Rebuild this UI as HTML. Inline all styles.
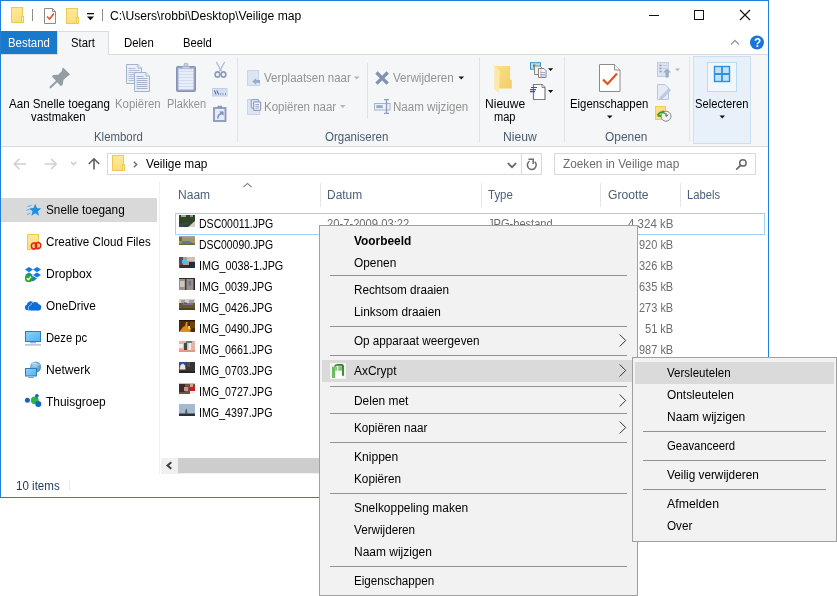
<!DOCTYPE html>
<html lang="nl"><head><meta charset="utf-8"><title>Veilige map</title>
<style>
html,body{margin:0;padding:0;background:#fff;}
body{width:837px;height:596px;position:relative;overflow:hidden;font-family:"Liberation Sans",sans-serif;font-size:12px;}
.a{position:absolute;}
.t{position:absolute;white-space:nowrap;transform-origin:0 0;display:block;}
svg{position:absolute;overflow:visible;}
.ms{left:330px;width:297px;height:1px;background:#919191;}
.ss{left:643px;width:183px;height:1px;background:#919191;}
.th{left:179px;width:16px;}

</style></head><body>
<!-- window frame -->
<div class="a" style="left:0;top:0;width:767px;height:496px;border:1px solid #2080d8;background:#fff"></div>
<!-- tab row -->
<div class="a" style="left:1px;top:31px;width:56px;height:23px;background:#1979ca"></div>
<!-- ribbon -->
<div class="a" style="left:1px;top:54px;width:767px;height:93px;background:#f5f6f7;border-top:1px solid #dadbdc;border-bottom:1px solid #dadbdc;box-sizing:border-box"></div>
<div class="a" style="left:57px;top:31px;width:52px;height:24px;background:#f5f6f7;border:1px solid #dadbdc;border-bottom:none;box-sizing:border-box"></div>
<!-- ribbon separators -->
<div class="a" style="left:237px;top:57px;width:1px;height:85px;background:#e2e3e4"></div>
<div class="a" style="left:367px;top:63px;width:1px;height:56px;background:#e2e3e4"></div>
<div class="a" style="left:479px;top:57px;width:1px;height:85px;background:#e2e3e4"></div>
<div class="a" style="left:564px;top:57px;width:1px;height:85px;background:#e2e3e4"></div>
<div class="a" style="left:689px;top:57px;width:1px;height:85px;background:#e2e3e4"></div>
<!-- selecteren box -->
<div class="a" style="left:693px;top:56px;width:58px;height:88px;background:#e8f1fa;border:1px solid #c9e0f5;box-sizing:border-box"></div>
<div class="a" style="left:707px;top:62px;width:30px;height:30px;background:#f1f7fc;border:1px solid #b9dcf6;box-sizing:border-box"></div>
<!-- address bar -->
<div class="a" style="left:107px;top:153px;width:435px;height:22px;border:1px solid #d9d9d9;box-sizing:border-box"></div>
<div class="a" style="left:521px;top:154px;width:1px;height:20px;background:#d9d9d9"></div>
<div class="a" style="left:554px;top:153px;width:202px;height:22px;border:1px solid #d9d9d9;box-sizing:border-box"></div>
<!-- nav pane -->
<div class="a" style="left:1px;top:198px;width:156px;height:24px;background:#d9d9d9"></div>
<div class="a" style="left:159px;top:181px;width:1px;height:293px;background:#f0f0f0"></div>
<!-- header separators -->
<div class="a" style="left:320px;top:183px;width:1px;height:24px;background:#e5e5e5"></div>
<div class="a" style="left:481px;top:183px;width:1px;height:24px;background:#e5e5e5"></div>
<div class="a" style="left:600px;top:183px;width:1px;height:24px;background:#e5e5e5"></div>
<div class="a" style="left:680px;top:183px;width:1px;height:24px;background:#e5e5e5"></div>
<!-- selected row -->
<div class="a" style="left:175px;top:213px;width:590px;height:22px;border:1px solid #99d1ff;box-sizing:border-box"></div>
<!-- scrollbar -->
<div class="a" style="left:161px;top:458px;width:607px;height:16px;background:#f0f0f0"></div>
<div class="a" style="left:178px;top:458px;width:460px;height:15px;background:#cdcdcd"></div>
<!-- status separator -->
<div class="a" style="left:69px;top:480px;width:1px;height:11px;background:#ececec"></div>
<svg width="837" height="596" viewBox="0 0 837 596" style="left:0;top:0">
<defs>
<linearGradient id="fy" x1="0" y1="0" x2="0" y2="1"><stop offset="0" stop-color="#fee99a"/><stop offset="1" stop-color="#fcdd7c"/></linearGradient>
</defs>
<!-- title bar icons -->
<g>
<rect x="11.5" y="7.5" width="11" height="15" fill="url(#fy)" stroke="#eecb50"/>
<rect x="21.5" y="16.5" width="2" height="6" fill="#fdeeb4" stroke="#eecb50"/>
<line x1="32.5" y1="9" x2="32.5" y2="21" stroke="#8d8d8d"/>
<path d="M44.5 8.5h8l3 3v12h-11z" fill="#fff" stroke="#8c8c8c"/>
<path d="M52.5 8.5v3h3" fill="none" stroke="#8c8c8c"/>
<polyline points="47,16.5 49.5,19 54,13.5" fill="none" stroke="#e8501c" stroke-width="1.6"/>
<rect x="66.500" y="8.500" width="11" height="15" fill="url(#fy)" stroke="#eecb50"/>
<rect x="76.500" y="17.500" width="2" height="6" fill="#fdeeb4" stroke="#eecb50"/>
<rect x="87" y="13" width="7" height="1.300" fill="#111"/>
<path d="M87 16.500h7l-3.500 3.700z" fill="#111"/>
<line x1="102.500" y1="9" x2="102.500" y2="21" stroke="#8d8d8d"/>
</g>
<!-- window controls -->
<line x1="649" y1="15.500" x2="659" y2="15.500" stroke="#111"/>
<rect x="694.500" y="10.500" width="9" height="9" fill="none" stroke="#111"/>
<path d="M740 10l10 10M750 10l-10 10" stroke="#111" stroke-width="1.100" fill="none"/>
<!-- ribbon collapse + help -->
<polyline points="731,44.500 735,40.500 739,44.500" fill="none" stroke="#9a9a9a" stroke-width="1.300"/>
<circle cx="757" cy="42.500" r="7" fill="#1b74d8"/>
<!-- address nav arrows -->
<g fill="none" stroke="#cfcfcf" stroke-width="1.500">
<path d="M26 164H14.500M19.500 158.800l-5.200 5.200 5.200 5.200"/>
<path d="M44.500 164H56M51 158.800l5.200 5.200-5.200 5.200"/>
</g>
<polyline points="71,162 73.600,164.600 76.200,162" fill="none" stroke="#c4c4c4" stroke-width="1.200"/>
<path d="M94 169.500V158.800M88.800 164l5.200-5.200 5.200 5.200" fill="none" stroke="#5f5f5f" stroke-width="1.600"/>
<!-- address folder -->
<rect x="112.500" y="155.500" width="11" height="15" fill="url(#fy)" stroke="#eecb50"/>
<rect x="122.500" y="164.500" width="2" height="6" fill="#fdeeb4" stroke="#eecb50"/>
<polyline points="133.800,161.800 136.700,164.500 133.800,167.200" fill="none" stroke="#6e6e6e" stroke-width="1.500"/>
<polyline points="507.800,163 512,167.200 516.200,163" fill="none" stroke="#626262" stroke-width="1.700"/>
<path d="M534.800 161.800a4.400 4.400 0 1 1-5.200-.6" fill="none" stroke="#6a6a6a" stroke-width="1.500"/>
<path d="M528.500 159.300h4.700v4.700" fill="none" stroke="#6a6a6a" stroke-width="1.500"/>
<!-- search magnifier -->
<circle cx="742.900" cy="162.900" r="3.200" fill="none" stroke="#6a6a6a" stroke-width="1.500"/>
<line x1="740.600" y1="165.300" x2="736.200" y2="169.700" stroke="#6a6a6a" stroke-width="1.700"/>
<!-- sort arrow -->
<polyline points="243.500,187.200 247.500,183.400 251.500,187.200" fill="none" stroke="#7a7a7a" stroke-width="1.100"/>
<!-- scrollbar arrow -->
<polyline points="171.300,462.200 167.500,465.500 171.300,468.800" fill="none" stroke="#404040" stroke-width="2"/>
</svg>
<svg width="837" height="596" viewBox="0 0 837 596" style="left:0;top:0">
<!-- pin -->
<path d="M63.300 67.800L70.200 74.400 67.600 76.300 63.400 80 62.900 84.300 60.900 86.200 52 76.400 53.300 74.900 58.200 74.700 62 70.900 62.300 68.600z" fill="#929da4"/>
<path d="M57.500 80.600L50.500 87.300" stroke="#929da4" stroke-width="2" stroke-linecap="round" fill="none"/>
<!-- copy icon (disabled) -->
<g fill="#e9eef8" stroke="#a3b2cf">
<path d="M126.500 64.500h11.500l3.500 3.500v15.500h-15z"/>
<path d="M138 64.500v3.500h3.500" fill="#f6f8fc"/>
</g>
<path d="M128.500 68.500h7M128.500 70.500h11M128.500 72.500h11M128.500 74.500h11M128.500 76.500h11M128.500 78.500h11M128.500 80.500h11" stroke="#b4c0d8" stroke-width="1"/>
<g fill="#e9eef8" stroke="#a3b2cf">
<path d="M134.500 72.500h11.500l3.500 3.500v15.500h-15z"/>
<path d="M146 72.500v3.500h3.500" fill="#f6f8fc"/>
</g>
<path d="M136.500 76.500h7M136.500 78.500h11M136.500 80.500h11M136.500 82.500h11M136.500 84.500h11M136.500 86.500h11M136.500 88.500h11" stroke="#a4b2ce" stroke-width="1"/>
<!-- paste icon -->
<rect x="176.500" y="66.500" width="19" height="25" rx="1" fill="#96a5c3" stroke="#8292b4"/>
<rect x="178.500" y="68.500" width="15" height="21" fill="#e9effa"/>
<path d="M179 71.500h14M179 74.500h14M179 77.500h14M179 80.500h14M179 83.500h14M179 86.500h14" stroke="#d3dcee" stroke-width="1"/>
<path d="M180 68.800c1.500-.3 2.500-1.300 3-2.600h6c.5 1.300 1.500 2.300 3 2.600z" fill="#c4cee2" stroke="#a3b0cc" stroke-width=".6"/>
<rect x="184" y="63.300" width="4" height="3.200" rx="1.200" fill="#c4cee2" stroke="#9dabc8" stroke-width=".7"/>
<!-- scissors -->
<path d="M216.300 62l5.400 9.500M224.700 62l-5.400 9.500" fill="none" stroke="#b0bdd6" stroke-width="1.400"/>
<g fill="none" stroke="#8a9cc4" stroke-width="1.700">
<ellipse cx="217.500" cy="74.500" rx="2.300" ry="2.700"/>
<ellipse cx="223.500" cy="74.500" rx="2.300" ry="2.700"/>
</g>
<!-- copy path -->
<rect x="212.500" y="88.500" width="14.500" height="7.500" fill="#d6dff0" stroke="#c3cfe6"/>
<path d="M214.500 90.500l1.500 4M217 90.500l1.500 4M220 94h1M222.500 94h1M225 94h1" stroke="#3c5a9a" stroke-width="1"/>
<!-- paste shortcut -->
<rect x="214" y="108" width="11.500" height="13" fill="#e4eaf6" stroke="#8797bf" stroke-width="1.800"/>
<rect x="217.500" y="105.800" width="4.500" height="2.200" fill="#8797bf"/>
<path d="M217.800 118.500c0-3 1.500-4.500 4-4.800" fill="none" stroke="#8797bf" stroke-width="1.700"/>
<path d="M219.800 111.800h3.400v3.400z" fill="#8797bf" stroke="#8797bf" stroke-width=".8"/>
<!-- move to -->
<path d="M247.500 70.500h11v10h1.200v5h-12.200z" fill="#dde5f3" stroke="#c8d4ea"/>
<path d="M260 80h-3.800v-1.900l-3.900 3.300 3.900 3.400v-1.900h3.800z" fill="#9aabc9"/>
<!-- copy to -->
<path d="M247.500 99.500h11v10h1.200v5h-12.200z" fill="#dde5f3" stroke="#c8d4ea"/>
<rect x="251.300" y="99.600" width="7" height="8.500" rx=".8" fill="#eef2f9" stroke="#95a5c6" stroke-width="1.200"/>
<rect x="253.600" y="101.800" width="7" height="8.500" rx=".8" fill="#f2f5fb" stroke="#8e9fc2" stroke-width="1.300"/>
<path d="M255.300 104.500h3.700M255.300 106.300h3.700M255.300 108.100h3.700" stroke="#8e9fc2" stroke-width=".9"/>
<!-- dropdown arrows (disabled) -->
<path d="M354 76.500h5.500l-2.750 3z" fill="#b5b5b5"/>
<path d="M340 105h5.500l-2.750 3z" fill="#b5b5b5"/>
<!-- delete X -->
<path d="M376.500 72.500l11.200 11.200M387.700 72.500l-11.200 11.200" stroke="#8191b2" stroke-width="3.300" fill="none"/>
<path d="M458.500 76.500h5.500l-2.750 3z" fill="#111"/>
<!-- rename -->
<rect x="374.500" y="103.500" width="15.500" height="6.500" fill="#eef2f9" stroke="#a3b2d0"/>
<rect x="376.300" y="105.200" width="6.500" height="2.900" fill="#98a8c8"/>
<path d="M386.500 99.800v13.400M384 99.600h5M384 113.400h5" stroke="#8e9ec0" stroke-width="1.400" fill="none"/>
<!-- new folder -->
<defs><linearGradient id="nf" x1="0" y1="0" x2="1" y2="1"><stop offset="0" stop-color="#fbe08c"/><stop offset="1" stop-color="#f4cd64"/></linearGradient></defs>
<path d="M494.200 66H510.100V79.800H511.800V88.400H498.500z" fill="url(#nf)"/>
<path d="M494.200 66L499.800 70.300 499 92.700 494.200 89.200z" fill="#fce9ab"/>
<!-- new item small icons -->
<rect x="530.500" y="62.700" width="10" height="6.500" fill="#bfe0f0" stroke="#3b8fc4"/>
<rect x="533" y="64.500" width="2.500" height="3" fill="#5a8a5a"/>
<path d="M534.500 66h5.500l2 2v6.500h-7.500z" fill="#f0f0f0" stroke="#8a8a8a"/>
<path d="M538.500 68.500h5.500l2 2v7h-7.500z" fill="#fdfdfd" stroke="#858585"/>
<path d="M540.500 72.500h4.500M540.500 74.500h4.500M540.500 76h4.500" stroke="#7aa0e0" stroke-width=".8"/>
<path d="M541 69.500v8" stroke="#e88" stroke-width=".8"/>
<path d="M548 68.200h5.200l-2.600 2.900z" fill="#111"/>
<path d="M533.500 84.500h8.500l3 3v12h-11.500z" fill="#fdfdfd" stroke="#7c7c7c" stroke-width="1.200"/>
<path d="M542 84.500v3h3" fill="#eee" stroke="#7c7c7c" stroke-width=".9"/>
<path d="M531 87.500h6M530 89.700h6M530 91.700h5" stroke="#1f5fb4" stroke-width="1.200"/>
<path d="M548 90h5.200l-2.600 2.900z" fill="#111"/>
<!-- properties -->
<path d="M599.500 64.500h15l5.500 5.500v21.500h-20.500z" fill="#fff" stroke="#8c8c8c"/>
<path d="M614.500 64.500v5.500h5.500" fill="#f2f2f2" stroke="#8c8c8c"/>
<polyline points="603,79.500 607.500,84 617,73.500" fill="none" stroke="#e8501c" stroke-width="2.200"/>
<path d="M607 115.500h5.500l-2.750 3z" fill="#111"/>
<!-- open small icons -->
<rect x="657.500" y="62.500" width="11" height="14" fill="#dbe3f1" stroke="#c2cde3"/>
<path d="M659.500 65.500h2M659.500 68.500h2M659.500 71.500h2" stroke="#8b9cbf" stroke-width="1.600"/>
<path d="M663 65.500h4M663 68.500h3" stroke="#c2cde3" stroke-width="1"/>
<path d="M667 77.500v-5h-2.500l4-4 4 4h-2.500v5z" fill="#9aaac8" transform="translate(-1.500,0)"/>
<path d="M675 68.500h5l-2.500 2.800z" fill="#b5b5b5"/>
<path d="M657.500 84.500h7.500l3.500 3.500v11.500h-11z" fill="#e6ecf7" stroke="#b9c6df"/>
<path d="M660.300 97.200l8.700-8.700 1.700 1.700-8.700 8.700-2.200.5z" fill="#c0cce4" stroke="#aebcd9" stroke-width=".6"/>
<!-- history -->
<rect x="655.500" y="106.500" width="10" height="13" fill="#fbdf85" stroke="#f3cc58"/>
<circle cx="666" cy="116.200" r="5" fill="#f4f4f4" stroke="#8a8a8a"/>
<path d="M666 113v3.400l2.200-1.600" fill="none" stroke="#444" stroke-width=".9"/>
<path d="M657.500 115.500c2-3.500 4-4 6-3l-1-1.800M657.500 115.500l3.800.6" fill="none" stroke="#2aa12a" stroke-width="1.800"/>
<!-- select grid -->
<rect x="714.500" y="66.500" width="15" height="15" fill="#bfe3f8" stroke="#2b92e2" stroke-width="1.400"/>
<path d="M722 66.500v15M714.500 74h15" stroke="#2b92e2" stroke-width="1.800"/>
<path d="M719.500 115.500h5.500l-2.750 3z" fill="#111"/>
</svg>
<svg width="837" height="596" viewBox="0 0 837 596" style="left:0;top:0">
<defs>
<linearGradient id="scr" x1="0" y1="0" x2="1" y2="1"><stop offset="0" stop-color="#8fd3fb"/><stop offset="1" stop-color="#4fb0f2"/></linearGradient>
<radialGradient id="glb" cx=".4" cy=".35" r=".7"><stop offset="0" stop-color="#a8d4ee"/><stop offset="1" stop-color="#3f86c4"/></radialGradient>
</defs>
<!-- quick access star -->
<path d="M35.200 203.800l1.700 4.300 4.400.3-3.400 2.900 1.100 4.400-3.800-2.400-3.800 2.400 1.100-4.400-3.400-2.900 4.400-.3z" fill="#1e8fe6"/>
<path d="M31.500 205.500l-4 1M29.500 209.500l-3 .8M30.500 213l-3.500 1.500" stroke="#59acee" stroke-width="1" fill="none"/>
<!-- creative cloud folder -->
<rect x="27.500" y="234.500" width="11" height="15" fill="url(#fy)" stroke="#eecb50"/>
<ellipse cx="34" cy="246" rx="2.600" ry="2.900" fill="none" stroke="#e0231c" stroke-width="1.500"/>
<ellipse cx="38" cy="245.500" rx="2.700" ry="3" fill="none" stroke="#e0231c" stroke-width="1.500"/>
<!-- dropbox -->
<g fill="#0f7be8">
<path d="M29 267l4 2.600-4 2.600-4-2.600z"/><path d="M37 267l4 2.600-4 2.600-4-2.600z"/>
<path d="M29 272.400l4 2.600-4 2.600-4-2.600z"/><path d="M37 272.400l4 2.600-4 2.600-4-2.600z"/>
<path d="M33 276l4 2.600-4 2.800-4-2.800z"/>
</g>
<circle cx="28.800" cy="278.200" r="3.900" fill="#2ca52c"/>
<polyline points="26.800,278.200 28.300,279.800 31,276.800" fill="none" stroke="#fff" stroke-width="1.300"/>
<!-- onedrive -->
<path d="M27.200 310.300a2.900 2.900 0 0 1-.4-5.600 3.900 3.900 0 0 1 6.800-2.200l-3 8z" fill="#0f6fd8"/>
<path d="M31.300 310.600a2.700 2.700 0 0 1-.3-5.400 4.100 4.100 0 0 1 7.700-.9 3.200 3.200 0 0 1-.2 6.300z" fill="#0f6fd8" stroke="#fff" stroke-width=".9"/>
<path d="M31.300 310.600a2.700 2.700 0 0 1-.3-5.400 4.100 4.100 0 0 1 7.700-.9 3.200 3.200 0 0 1-.2 6.300z" fill="#0f6fd8"/>
<!-- this pc -->
<rect x="25.500" y="331.500" width="15" height="10" fill="url(#scr)" stroke="#2f7eb8"/>
<rect x="30" y="342" width="6" height="1.300" fill="#9ab0c6"/>
<rect x="25" y="344.300" width="16" height="1.200" fill="#9fb4c8"/>
<!-- network -->
<circle cx="35.600" cy="367" r="5.500" fill="url(#glb)"/>
<path d="M32 364c1.500-1 3-1 4 0s2 1 3.500.5M33 369c1.500.5 2.500-.5 4 .5" fill="none" stroke="#d6ebf7" stroke-width=".9"/>
<rect x="25.500" y="368.500" width="11" height="7.500" fill="url(#scr)" stroke="#2f7eb8"/>
<rect x="28" y="377" width="6" height="1" fill="#8aa4bc"/>
<!-- homegroup -->
<circle cx="34.800" cy="400.300" r="3.900" fill="#2eb34a"/>
<circle cx="27.400" cy="400.300" r="2.500" fill="#1464c0"/>
<circle cx="36.900" cy="395.800" r="1.900" fill="#1464c0"/>
<circle cx="38.300" cy="403.900" r="3" fill="#1464c0"/>
</svg>
<!-- thumbnails -->
<svg width="837" height="596" viewBox="0 0 837 596" style="left:0;top:0">
<defs><filter id="bl" x="-10%" y="-10%" width="120%" height="120%"><feGaussianBlur stdDeviation=".55"/></filter>
<clipPath id="c1"><rect x="179" y="215" width="16" height="12"/></clipPath>
<clipPath id="c2"><rect x="179" y="236" width="16" height="9"/></clipPath>
<clipPath id="c3"><rect x="179" y="257" width="16" height="11"/></clipPath>
<clipPath id="c4"><rect x="179" y="278" width="16" height="12"/></clipPath>
<clipPath id="c5"><rect x="179" y="299" width="16" height="11"/></clipPath>
<clipPath id="c6"><rect x="179" y="320" width="16" height="12"/></clipPath>
<clipPath id="c7"><rect x="179" y="341" width="16" height="11"/></clipPath>
<clipPath id="c8"><rect x="179" y="362" width="16" height="11"/></clipPath>
<clipPath id="c9"><rect x="179" y="383" width="16" height="11"/></clipPath>
<clipPath id="c10"><rect x="179" y="404" width="16" height="12"/></clipPath>
</defs>
<g clip-path="url(#c1)"><g filter="url(#bl)">
<rect x="178" y="214" width="18" height="14" fill="#2f4426"/>
<rect x="181" y="214" width="5" height="3" fill="#9fb09a"/><rect x="190" y="214" width="3" height="3" fill="#8a9a88"/>
<path d="M179 224l9-2 3 1-12 5z" fill="#3a4650"/>
<path d="M196 220l-9 8h9z" fill="#d8d0c8"/>
</g></g>
<g clip-path="url(#c2)"><g filter="url(#bl)">
<rect x="178" y="235" width="18" height="11" fill="#a8965a"/>
<rect x="178" y="235" width="18" height="2.500" fill="#9aa8b4"/>
<path d="M181 241l8 0 6 3-12 0z" fill="#5a7aa0"/>
<rect x="178" y="243.500" width="18" height="2" fill="#6a6a3a"/>
<rect x="179" y="237" width="3" height="4" fill="#7a6a3a"/>
</g></g>
<g clip-path="url(#c3)"><g filter="url(#bl)">
<rect x="178" y="256" width="18" height="13" fill="#b89c8c"/>
<rect x="178" y="256" width="5" height="13" fill="#6a4452"/>
<rect x="182" y="260" width="5" height="3.500" fill="#48c4e4"/>
<rect x="187" y="256" width="8" height="5" fill="#d4c0b0"/>
<rect x="189" y="262" width="7" height="7" fill="#222a44"/>
<rect x="180" y="265" width="9" height="3" fill="#3a2c34"/>
</g></g>
<g clip-path="url(#c4)"><g filter="url(#bl)">
<rect x="178" y="277" width="18" height="14" fill="#9a9088"/>
<rect x="178" y="277" width="18" height="2" fill="#3a2c22"/>
<rect x="180" y="281" width="4.500" height="6" fill="#c8c8c2"/>
<rect x="185" y="279" width="1.500" height="12" fill="#4a3a30"/>
<rect x="188.500" y="281" width="2.500" height="4.500" fill="#6a7494"/>
<rect x="193.500" y="277" width="2" height="14" fill="#2c2424"/>
</g></g>
<g clip-path="url(#c5)"><g filter="url(#bl)">
<rect x="178" y="298" width="18" height="13" fill="#5e5c2c"/>
<rect x="178" y="298" width="18" height="5" fill="#d4d2ca"/>
<rect x="181" y="300" width="4" height="3" fill="#a8a090"/><rect x="189" y="300" width="5" height="3" fill="#9aa0a0"/>
<rect x="183" y="303" width="10" height="2" fill="#8a6a90"/>
<rect x="184" y="302.500" width="3" height="1.500" fill="#3a5aa0"/>
<rect x="178" y="308" width="18" height="3" fill="#4a4420"/>
</g></g>
<g clip-path="url(#c6)"><g filter="url(#bl)">
<rect x="178" y="319" width="18" height="14" fill="#4e2a08"/>
<rect x="178" y="319" width="18" height="2" fill="#2c1604"/>
<path d="M179 332l4-5 2-1 1-4 1.500 0 0 5 3 1 0 4z" fill="#e08a22"/>
<rect x="188" y="326" width="2.500" height="3" fill="#f4d040"/>
<rect x="190" y="322" width="5" height="6" fill="#6a4410"/>
</g></g>
<g clip-path="url(#c7)"><g filter="url(#bl)">
<rect x="178" y="340" width="18" height="13" fill="#e6b4a4"/>
<rect x="179" y="344" width="4" height="4" fill="#f6ece8"/>
<rect x="184" y="343" width="3" height="7" fill="#3c4c40"/>
<rect x="188.500" y="343" width="2.500" height="7" fill="#e8eef4"/>
<rect x="186" y="341" width="6" height="2" fill="#6a7a70"/>
<rect x="178" y="350" width="18" height="3" fill="#e09a7a"/>
</g></g>
<g clip-path="url(#c8)"><g filter="url(#bl)">
<rect x="178" y="361" width="18" height="13" fill="#3a3232"/>
<rect x="178" y="361" width="8" height="8" fill="#2450b4"/>
<path d="M180.500 365l2.500-1.500 2 2 .500 4-6 0z" fill="#ece4cc"/>
<rect x="187" y="362" width="3" height="5" fill="#4a5058"/>
<rect x="178" y="371" width="18" height="3" fill="#2a2020"/>
</g></g>
<g clip-path="url(#c9)"><g filter="url(#bl)">
<rect x="178" y="382" width="18" height="13" fill="#6a5450"/>
<rect x="178" y="382" width="18" height="2" fill="#d8b8b8"/>
<rect x="179" y="384" width="6" height="8" fill="#3c2c2c"/>
<rect x="184" y="387" width="4" height="4" fill="#c89880"/>
<rect x="189" y="385" width="6" height="6" fill="#c42424"/>
<rect x="190" y="384" width="3" height="3" fill="#d0a088"/>
<rect x="190" y="391" width="5" height="3" fill="#f0ece8"/>
</g></g>
<g clip-path="url(#c10)"><g filter="url(#bl)">
<rect x="178" y="403" width="18" height="14" fill="#a4bad0"/>
<rect x="178" y="413.500" width="18" height="3" fill="#2a3034"/>
<path d="M185 414l.500-4 1-1.500.500 1.500.500 4z" fill="#5a5a58"/>
</g></g>
</svg>

<span class="t" style="left:109.7px;top:10.00px;font-size:12px;line-height:12px;color:#000;transform:scaleX(1.0094);">C:\Users\robbi\Desktop\Veilige map</span>
<span class="t" style="left:8.2px;top:37.00px;font-size:12px;line-height:12px;color:#fff;transform:scaleX(0.9513);">Bestand</span>
<span class="t" style="left:71.4px;top:37.00px;font-size:12px;line-height:12px;color:#000;transform:scaleX(0.9391);">Start</span>
<span class="t" style="left:124.10000000000001px;top:37.00px;font-size:12px;line-height:12px;color:#000;transform:scaleX(0.9503);">Delen</span>
<span class="t" style="left:182.7px;top:37.00px;font-size:12px;line-height:12px;color:#000;transform:scaleX(0.9348);">Beeld</span>
<span class="t" style="left:9.2px;top:98.00px;font-size:12px;line-height:12px;color:#000;transform:scaleX(0.9641);">Aan Snelle toegang</span>
<span class="t" style="left:31.2px;top:111.00px;font-size:12px;line-height:12px;color:#000;transform:scaleX(0.9409);">vastmaken</span>
<span class="t" style="left:115.3px;top:98.00px;font-size:12px;line-height:12px;color:#939393;transform:scaleX(0.9512);">Kopiëren</span>
<span class="t" style="left:166.89999999999998px;top:98.00px;font-size:12px;line-height:12px;color:#939393;transform:scaleX(0.9156);">Plakken</span>
<span class="t" style="left:94.3px;top:131.00px;font-size:12px;line-height:12px;color:#4a5b70;transform:scaleX(0.9502);">Klembord</span>
<span class="t" style="left:264.0px;top:72.00px;font-size:12px;line-height:12px;color:#939393;transform:scaleX(0.9566);">Verplaatsen naar</span>
<span class="t" style="left:264.0px;top:101.00px;font-size:12px;line-height:12px;color:#939393;transform:scaleX(0.9577);">Kopiëren naar</span>
<span class="t" style="left:393.09999999999997px;top:72.00px;font-size:12px;line-height:12px;color:#939393;transform:scaleX(0.9681);">Verwijderen</span>
<span class="t" style="left:393.09999999999997px;top:101.00px;font-size:12px;line-height:12px;color:#939393;transform:scaleX(0.9650);">Naam wijzigen</span>
<span class="t" style="left:325.3px;top:131.00px;font-size:12px;line-height:12px;color:#4a5b70;transform:scaleX(0.9599);">Organiseren</span>
<span class="t" style="left:484.7px;top:98.00px;font-size:12px;line-height:12px;color:#000;transform:scaleX(1.0042);">Nieuwe</span>
<span class="t" style="left:493.7px;top:111.00px;font-size:12px;line-height:12px;color:#000;transform:scaleX(0.9210);">map</span>
<span class="t" style="left:503.0px;top:131.00px;font-size:12px;line-height:12px;color:#4a5b70;transform:scaleX(1.0102);">Nieuw</span>
<span class="t" style="left:570.1px;top:98.00px;font-size:12px;line-height:12px;color:#000;transform:scaleX(0.9464);">Eigenschappen</span>
<span class="t" style="left:604.7px;top:131.00px;font-size:12px;line-height:12px;color:#4a5b70;transform:scaleX(0.9929);">Openen</span>
<span class="t" style="left:694.7px;top:98.00px;font-size:12px;line-height:12px;color:#000;transform:scaleX(0.9325);">Selecteren</span>
<span class="t" style="left:146.2px;top:158.00px;font-size:12px;line-height:12px;color:#000;transform:scaleX(0.9896);">Veilige map</span>
<span class="t" style="left:563.2px;top:158.00px;font-size:12px;line-height:12px;color:#6d6d6d;transform:scaleX(0.9841);">Zoeken in Veilige map</span>
<span class="t" style="left:178.0px;top:189.00px;font-size:12px;line-height:12px;color:#4c607a;transform:scaleX(1.0026);">Naam</span>
<span class="t" style="left:326.7px;top:189.00px;font-size:12px;line-height:12px;color:#4c607a;transform:scaleX(0.9959);">Datum</span>
<span class="t" style="left:487.5px;top:189.00px;font-size:12px;line-height:12px;color:#4c607a;transform:scaleX(0.9571);">Type</span>
<span class="t" style="left:607.5px;top:189.00px;font-size:12px;line-height:12px;color:#4c607a;transform:scaleX(1.0142);">Grootte</span>
<span class="t" style="left:687.3000000000001px;top:189.00px;font-size:12px;line-height:12px;color:#4c607a;transform:scaleX(0.9357);">Labels</span>
<span class="t" style="left:45.7px;top:204.00px;font-size:12px;line-height:12px;color:#000;transform:scaleX(0.9828);">Snelle toegang</span>
<span class="t" style="left:45.7px;top:236.00px;font-size:12px;line-height:12px;color:#000;transform:scaleX(0.9690);">Creative Cloud Files</span>
<span class="t" style="left:45.7px;top:268.00px;font-size:12px;line-height:12px;color:#000;transform:scaleX(1.0075);">Dropbox</span>
<span class="t" style="left:45.7px;top:300.00px;font-size:12px;line-height:12px;color:#000;transform:scaleX(0.9805);">OneDrive</span>
<span class="t" style="left:45.7px;top:332.00px;font-size:12px;line-height:12px;color:#000;transform:scaleX(0.9334);">Deze pc</span>
<span class="t" style="left:45.7px;top:364.00px;font-size:12px;line-height:12px;color:#000;transform:scaleX(1.0065);">Netwerk</span>
<span class="t" style="left:45.7px;top:396.00px;font-size:12px;line-height:12px;color:#000;transform:scaleX(0.9942);">Thuisgroep</span>
<span class="t" style="left:198.7px;top:218.00px;font-size:12px;line-height:12px;color:#000;transform:scaleX(0.8781);">DSC00011.JPG</span>
<span class="t" style="left:198.7px;top:239.00px;font-size:12px;line-height:12px;color:#000;transform:scaleX(0.8689);">DSC00090.JPG</span>
<span class="t" style="left:198.7px;top:260.00px;font-size:12px;line-height:12px;color:#000;transform:scaleX(0.9028);">IMG_0038-1.JPG</span>
<span class="t" style="left:198.7px;top:281.00px;font-size:12px;line-height:12px;color:#000;transform:scaleX(0.8886);">IMG_0039.JPG</span>
<span class="t" style="left:198.7px;top:302.00px;font-size:12px;line-height:12px;color:#000;transform:scaleX(0.8886);">IMG_0426.JPG</span>
<span class="t" style="left:198.7px;top:323.00px;font-size:12px;line-height:12px;color:#000;transform:scaleX(0.8886);">IMG_0490.JPG</span>
<span class="t" style="left:198.7px;top:344.00px;font-size:12px;line-height:12px;color:#000;transform:scaleX(0.8886);">IMG_0661.JPG</span>
<span class="t" style="left:198.7px;top:365.00px;font-size:12px;line-height:12px;color:#000;transform:scaleX(0.8886);">IMG_0703.JPG</span>
<span class="t" style="left:198.7px;top:386.00px;font-size:12px;line-height:12px;color:#000;transform:scaleX(0.8886);">IMG_0727.JPG</span>
<span class="t" style="left:198.7px;top:407.00px;font-size:12px;line-height:12px;color:#000;transform:scaleX(0.8886);">IMG_4397.JPG</span>
<span class="t" style="left:15.7px;top:480.00px;font-size:12px;line-height:12px;color:#1e395b;transform:scaleX(0.9634);">10 items</span>
<span class="t" style="left:753.7px;top:37.00px;font-size:12px;line-height:12px;color:#fff;font-weight:bold;transform:scaleX(0.9804);">?</span>
<span class="t" style="left:327.2px;top:218.00px;font-size:12px;line-height:12px;color:#6d6d6d;transform:scaleX(0.9333);">20-7-2009 03:22</span>
<span class="t" style="left:487.7px;top:218.00px;font-size:12px;line-height:12px;color:#6d6d6d;transform:scaleX(0.9237);">JPG-bestand</span>
<span class="t" style="left:628.0px;top:218.00px;font-size:12px;line-height:12px;color:#6d6d6d;transform:scaleX(0.9583);">4.324 kB</span>
<span class="t" style="left:639.2px;top:239.00px;font-size:12px;line-height:12px;color:#6d6d6d;transform:scaleX(0.9154);">920 kB</span>
<span class="t" style="left:639.2px;top:260.00px;font-size:12px;line-height:12px;color:#6d6d6d;transform:scaleX(0.9154);">326 kB</span>
<span class="t" style="left:639.2px;top:281.00px;font-size:12px;line-height:12px;color:#6d6d6d;transform:scaleX(0.9154);">635 kB</span>
<span class="t" style="left:639.2px;top:302.00px;font-size:12px;line-height:12px;color:#6d6d6d;transform:scaleX(0.9154);">273 kB</span>
<span class="t" style="left:645.2px;top:323.00px;font-size:12px;line-height:12px;color:#6d6d6d;transform:scaleX(0.9189);">51 kB</span>
<span class="t" style="left:639.2px;top:344.00px;font-size:12px;line-height:12px;color:#6d6d6d;transform:scaleX(0.9154);">987 kB</span>
<!-- context menu -->
<div class="a" style="left:319px;top:225px;width:319px;height:371px;background:#f2f2f2;border:1px solid #a0a0a0;box-sizing:border-box"></div>
<div class="a" style="left:322px;top:360px;width:310px;height:22px;background:#dadada"></div>
<div class="a ms" style="top:275px"></div>
<div class="a ms" style="top:326px"></div>
<div class="a ms" style="top:355px"></div>
<div class="a ms" style="top:386px"></div>
<div class="a ms" style="top:413px"></div>
<div class="a ms" style="top:442px"></div>
<div class="a ms" style="top:493px"></div>
<div class="a ms" style="top:566px"></div>
<!-- submenu -->
<div class="a" style="left:632px;top:357px;width:205px;height:185px;background:#f2f2f2;border:1px solid #a0a0a0;box-sizing:border-box"></div>
<div class="a" style="left:635px;top:362px;width:199px;height:22px;background:#dadada"></div>
<div class="a ss" style="top:431px"></div>
<div class="a ss" style="top:460px"></div>
<div class="a ss" style="top:489px"></div>
<svg width="837" height="596" viewBox="0 0 837 596" style="left:0;top:0">
<g fill="none" stroke="#333" stroke-width="1">
<polyline points="619.700,334.500 625.700,340.500 619.700,346.500"/>
<polyline points="619.700,364.500 625.700,370.500 619.700,376.500"/>
<polyline points="619.700,394.500 625.700,400.500 619.700,406.500"/>
<polyline points="619.700,421.500 625.700,427.500 619.700,433.500"/>
</g>
<!-- axcrypt icon -->
<rect x="330" y="363" width="16" height="16" fill="#f3f3f3"/>
<rect x="335.300" y="370.800" width="6.800" height="7.200" fill="#fff"/>
<rect x="332" y="366.700" width="3.200" height="11.200" fill="#6cbc64"/>
<rect x="335.300" y="366.700" width="1.700" height="4" fill="#7cc474"/>
<rect x="338.300" y="366.300" width="3.600" height="4.400" fill="#7cc474"/>
<path d="M334.300 366.700C334.500 364.600 336 364 338 364H341.500C343.300 364 343.900 365 343.900 366.500V375.700H342.100V367C342.100 366 341.500 365.800 340.500 365.800H337.500C336 365.800 335.500 366.200 335.300 367z" fill="#2f7f22"/>
</svg>

<span class="t" style="left:353.7px;top:235.00px;font-size:12px;line-height:12px;color:#000;font-weight:bold;transform:scaleX(0.9914);">Voorbeeld</span>
<span class="t" style="left:353.7px;top:257.00px;font-size:12px;line-height:12px;color:#000;transform:scaleX(0.9906);">Openen</span>
<span class="t" style="left:353.7px;top:284.00px;font-size:12px;line-height:12px;color:#000;transform:scaleX(0.9765);">Rechtsom draaien</span>
<span class="t" style="left:353.7px;top:306.00px;font-size:12px;line-height:12px;color:#000;transform:scaleX(0.9868);">Linksom draaien</span>
<span class="t" style="left:353.7px;top:335.00px;font-size:12px;line-height:12px;color:#000;transform:scaleX(0.9746);">Op apparaat weergeven</span>
<span class="t" style="left:353.7px;top:365.00px;font-size:12px;line-height:12px;color:#000;transform:scaleX(0.9956);">AxCrypt</span>
<span class="t" style="left:353.7px;top:395.00px;font-size:12px;line-height:12px;color:#000;transform:scaleX(0.9945);">Delen met</span>
<span class="t" style="left:353.7px;top:422.00px;font-size:12px;line-height:12px;color:#000;transform:scaleX(0.9749);">Kopiëren naar</span>
<span class="t" style="left:353.7px;top:451.00px;font-size:12px;line-height:12px;color:#000;transform:scaleX(1.0057);">Knippen</span>
<span class="t" style="left:353.7px;top:473.00px;font-size:12px;line-height:12px;color:#000;transform:scaleX(0.9803);">Kopiëren</span>
<span class="t" style="left:353.7px;top:502.00px;font-size:12px;line-height:12px;color:#000;transform:scaleX(0.9952);">Snelkoppeling maken</span>
<span class="t" style="left:353.7px;top:524.00px;font-size:12px;line-height:12px;color:#000;transform:scaleX(0.9744);">Verwijderen</span>
<span class="t" style="left:353.7px;top:546.00px;font-size:12px;line-height:12px;color:#000;transform:scaleX(0.9983);">Naam wijzigen</span>
<span class="t" style="left:353.7px;top:575.00px;font-size:12px;line-height:12px;color:#000;transform:scaleX(0.9694);">Eigenschappen</span>
<span class="t" style="left:667.0px;top:367.00px;font-size:12px;line-height:12px;color:#000;transform:scaleX(0.9630);">Versleutelen</span>
<span class="t" style="left:667.0px;top:389.00px;font-size:12px;line-height:12px;color:#000;transform:scaleX(0.9912);">Ontsleutelen</span>
<span class="t" style="left:667.0px;top:411.00px;font-size:12px;line-height:12px;color:#000;transform:scaleX(1.0034);">Naam wijzigen</span>
<span class="t" style="left:667.0px;top:440.00px;font-size:12px;line-height:12px;color:#000;transform:scaleX(0.9452);">Geavanceerd</span>
<span class="t" style="left:667.0px;top:469.00px;font-size:12px;line-height:12px;color:#000;transform:scaleX(0.9830);">Veilig verwijderen</span>
<span class="t" style="left:667.0px;top:498.00px;font-size:12px;line-height:12px;color:#000;transform:scaleX(1.0256);">Afmelden</span>
<span class="t" style="left:667.0px;top:520.00px;font-size:12px;line-height:12px;color:#000;transform:scaleX(0.9763);">Over</span>
</body></html>
